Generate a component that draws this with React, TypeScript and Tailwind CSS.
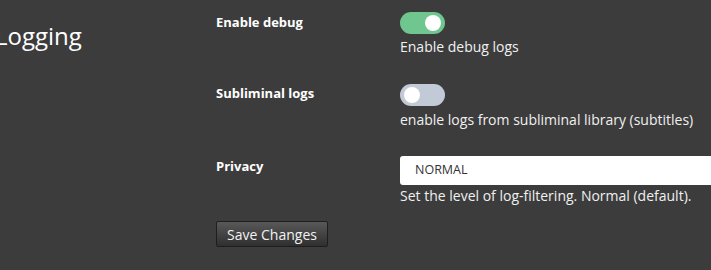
import { useState } from 'react'

function Toggle({ on, onChange }: { on: boolean; onChange: () => void }) {
  return (
    <button
      onClick={onChange}
      className={`relative h-[22px] w-[45px] rounded-full transition-colors ${on ? 'bg-[#6fc68e]' : 'bg-[#c2cad7]'}`}
    >
      <span
        className={`absolute top-[3px] h-4 w-4 rounded-full bg-white transition-all ${on ? 'left-[25px]' : 'left-[4px]'}`}
      />
    </button>
  )
}

export default function App() {
  const [debug, setDebug] = useState(true)
  const [sublim, setSublim] = useState(false)

  return (
    <div
      className="flex h-[270px] w-[711px] overflow-hidden bg-[#3c3c3c] text-white"
      style={{ fontFamily: '"Open Sans", sans-serif' }}
    >
      {/* Section title */}
      <div className="w-[216px] shrink-0 pt-[20px]">
        <h3 className="-ml-[5px] text-[24px] leading-[32px] font-normal text-white">Logging</h3>
      </div>

      {/* Settings */}
      <div className="flex flex-1 flex-col">
        <div className="flex pt-[12px]">
          <label className="w-[184px] shrink-0 pt-[1px] text-[13px] leading-[18px] font-bold">Enable debug</label>
          <div className="flex flex-col items-start">
            <Toggle on={debug} onChange={() => setDebug(!debug)} />
            <span className="mt-[3px] text-[14px] leading-[20px] text-[#f0f0f0]">Enable debug logs</span>
          </div>
        </div>

        <div className="flex pt-[27px]">
          <label className="w-[184px] shrink-0 text-[13px] leading-[18px] font-bold">Subliminal logs</label>
          <div className="flex flex-col items-start">
            <Toggle on={sublim} onChange={() => setSublim(!sublim)} />
            <span className="mt-[4px] text-[14px] leading-[20px] text-[#f0f0f0]">
              enable logs from subliminal library (subtitles)
            </span>
          </div>
        </div>

        <div className="flex pt-[26px]">
          <label className="w-[184px] shrink-0 pt-[1px] text-[13px] leading-[18px] font-bold">Privacy</label>
          <div className="flex flex-1 flex-col items-stretch">
            <div className="flex h-[29px] w-[340px] items-center rounded-[3px] bg-white pl-[15px] text-[12.5px] text-[#333]">
              NORMAL
            </div>
            <span className="mt-[1px] text-[14px] leading-[20px] text-[#f0f0f0]">
              Set the level of log-filtering. Normal (default).
            </span>
          </div>
        </div>

        <div className="pt-[15px]">
          <button className="h-[26px] w-[112px] rounded-[2px] border border-[#1e1e1e] bg-gradient-to-b from-[#595959] to-[#2f2f2f] text-[14px] text-[#f2f2f2]">
            Save Changes
          </button>
        </div>
      </div>
    </div>
  )
}
